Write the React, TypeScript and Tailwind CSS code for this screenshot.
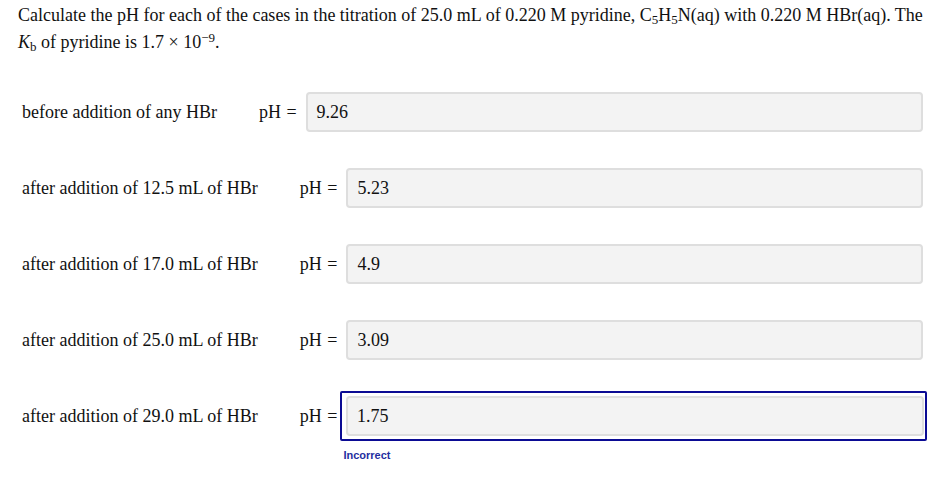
const rows = [
  { label: 'before addition of any HBr', value: '9.26' },
  { label: 'after addition of 12.5 mL of HBr', value: '5.23' },
  { label: 'after addition of 17.0 mL of HBr', value: '4.9' },
  { label: 'after addition of 25.0 mL of HBr', value: '3.09' },
  { label: 'after addition of 29.0 mL of HBr', value: '1.75', incorrect: true },
]

function PhInput({ value }: { value: string }) {
  return (
    <div className="h-[40px] flex items-center px-[9px] border-2 border-[#dedede] bg-[#f3f3f3] rounded-[4px] text-[18px] text-[#111]">
      {value}
    </div>
  )
}

export default function App() {
  return (
    <div className="w-[950px] h-[490px] bg-white text-[#111] font-['Liberation_Serif','Times_New_Roman',serif] text-[18px]">
      <div className="pt-[2px] pl-[18px] pr-[4px] leading-[27px] whitespace-nowrap">
        Calculate the pH for each of the cases in the titration of 25.0 mL of 0.220 M pyridine, C
        <sub className="text-[13px]">5</sub>H<sub className="text-[13px]">5</sub>N(aq) with 0.220 M HBr(aq). The
        <br />
        <i>K</i>
        <sub className="text-[13px]">b</sub> of pyridine is 1.7 × 10<sup className="text-[13px]">−9</sup>.
      </div>

      <div className="flex flex-col gap-[36px] mt-[36px] pl-[22px] pr-[27px]">
        {rows.map((row) => (
          <div key={row.label} className="flex items-center h-[40px]">
            <span className="mr-[42px] whitespace-nowrap">{row.label}</span>
            <span className="mr-[9px] whitespace-nowrap [word-spacing:1px]">pH =</span>
            {row.incorrect ? (
              <div className="relative flex-1 ml-[-6px] mr-[-4px]">
                <div className="border-[2.5px] border-[#0b0b94] rounded-[2px] pl-[3.5px] pr-[1.5px] py-[3px]">
                  <PhInput value={row.value} />
                </div>
                <div className="absolute left-[3px] top-[56px] text-[11px] font-bold text-[#1f2fa0] font-['Liberation_Sans',Arial,sans-serif]">
                  Incorrect
                </div>
              </div>
            ) : (
              <div className="flex-1">
                <PhInput value={row.value} />
              </div>
            )}
          </div>
        ))}
      </div>
    </div>
  )
}
